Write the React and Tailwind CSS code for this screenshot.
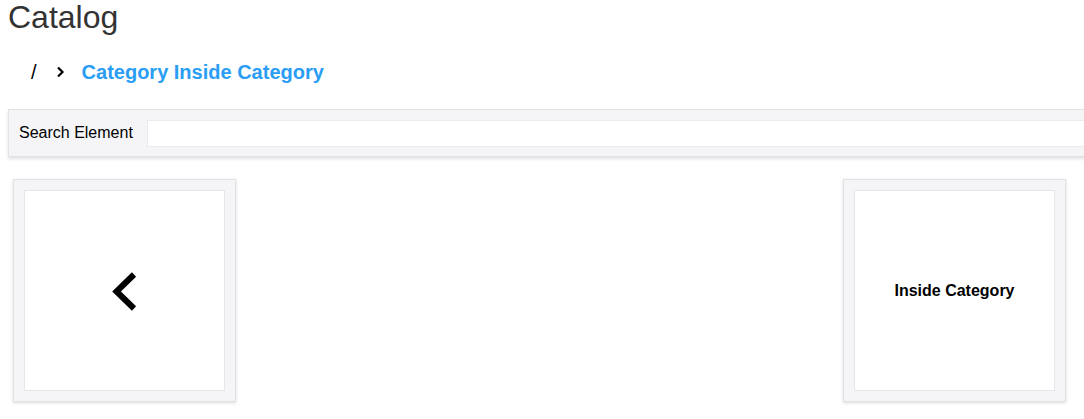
export default function App() {
  return (
    <div className="w-[1084px] h-[419px] overflow-hidden bg-white" style={{ fontFamily: '"Liberation Sans", Arial, sans-serif' }}>
      <h1 className="ml-[8px] text-[32px] leading-[34px] text-[#333333] font-normal">Catalog</h1>
      <div className="mt-[26px] flex items-center h-[24px] pl-[31px]">
        <span className="text-[20px] leading-[24px] text-black">/</span>
        <svg className="ml-[19px]" width="9" height="12" viewBox="0 0 9 12">
          <path d="M2 1.5 L6.5 6 L2 10.5" fill="none" stroke="#000" strokeWidth="2.2" />
        </svg>
        <span className="ml-[17px] text-[20px] leading-[24px] font-bold text-[#2a9df4]">Category Inside Category</span>
      </div>
      <div className="mt-[25px] ml-[8px] w-[1100px] h-[48px] flex items-center bg-[#f5f5f7] border border-[#e2e2e6] shadow-[0_2px_3px_rgba(0,0,0,0.12)] px-[10px]">
        <span className="text-[16px] leading-[18px] text-black">Search Element</span>
        <input className="ml-[14px] flex-1 h-[27px] bg-white border border-[#ebebef] outline-none" />
      </div>
      <div className="mt-[22px] ml-[13px] w-[1053px] flex justify-between">
        <div className="w-[223px] h-[223px] p-[10px] bg-[#f5f5f7] border border-[#e2e2e6] shadow-[0_1px_3px_rgba(0,0,0,0.15)]">
          <div className="w-[201px] h-[201px] bg-white border border-[#e6e6ea] flex items-center justify-center">
            <svg width="26" height="40" viewBox="0 0 26 40">
              <path d="M22 3.5 L4.5 20.5 L22 37.5" fill="none" stroke="#000" strokeWidth="6" strokeLinecap="butt" strokeLinejoin="miter" />
            </svg>
          </div>
        </div>
        <div className="w-[223px] h-[223px] p-[10px] bg-[#f5f5f7] border border-[#e2e2e6] shadow-[0_1px_3px_rgba(0,0,0,0.15)]">
          <div className="w-[201px] h-[201px] bg-white border border-[#e6e6ea] flex items-center justify-center">
            <span className="text-[16px] font-bold text-black">Inside Category</span>
          </div>
        </div>
      </div>
    </div>
  );
}
